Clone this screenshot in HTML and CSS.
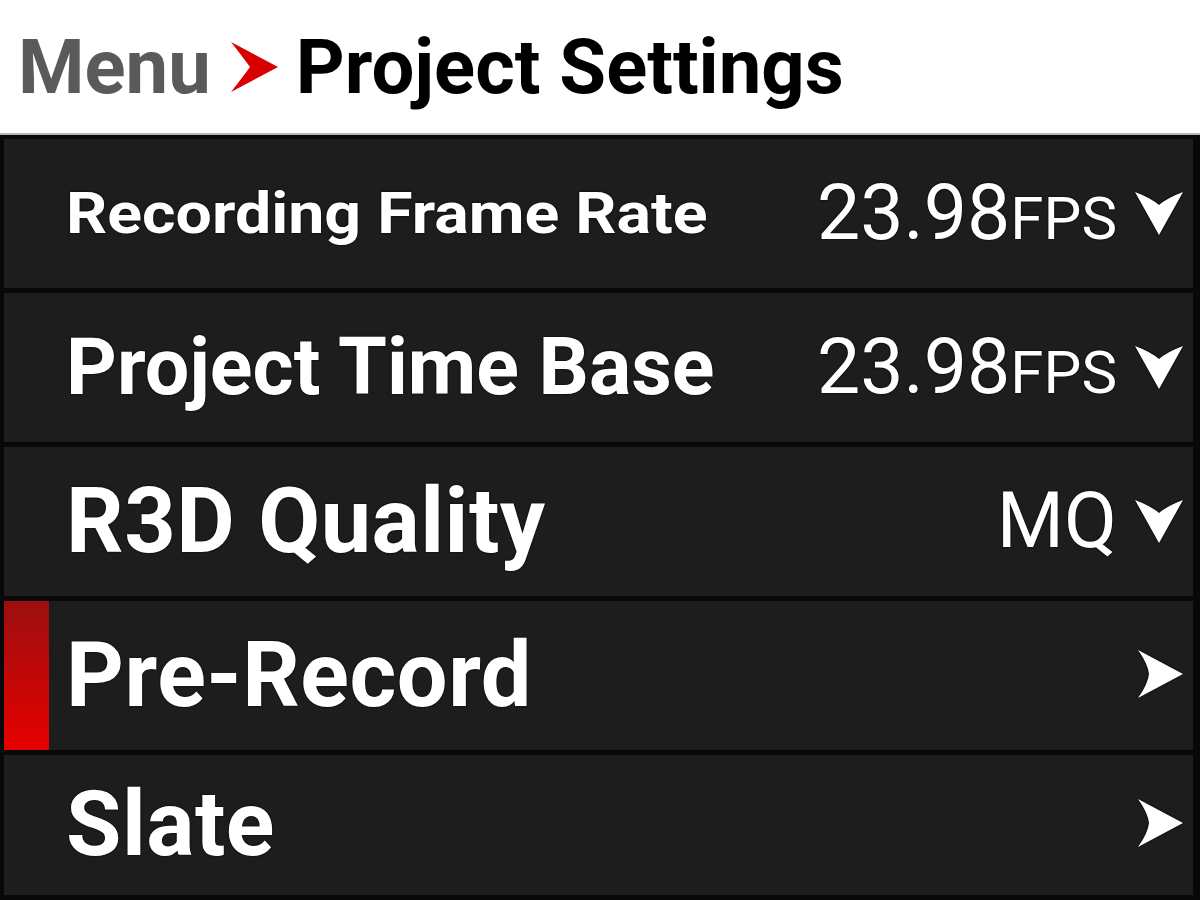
FILE: index.html
```html
<!DOCTYPE html>
<html lang="en">
<head>
<meta charset="utf-8">
<title>Project Settings</title>
<link rel="stylesheet" href="styles.css">
</head>
<body>
<header class="crumbs">
  <span class="crumb-parent">Menu</span>
  <svg class="crumb-sep" viewBox="0 0 47 50" width="47" height="50" aria-hidden="true"><path d="M0 0 L47 25 L0 50 Q14 32 19 25 Q14 18 0 0 Z" fill="#d80000"/></svg>
  <span class="crumb-current">Project Settings</span>
</header>
<main class="list">
  <div class="row">
    <span class="label"><span class="label-s">Recording Frame Rate</span></span>
    <span class="value">23.98<span class="unit">FPS</span></span>
    <svg class="icon-down" viewBox="0 0 48 43" width="48" height="43" aria-hidden="true"><path d="M0 0 Q16 6 24 13 Q32 6 48 0 L24 43 Z" fill="#fff"/></svg>
  </div>
  <div class="row">
    <span class="label label-m">Project Time Base</span>
    <span class="value">23.98<span class="unit">FPS</span></span>
    <svg class="icon-down" viewBox="0 0 48 43" width="48" height="43" aria-hidden="true"><path d="M0 0 Q16 6 24 13 Q32 6 48 0 L24 43 Z" fill="#fff"/></svg>
  </div>
  <div class="row">
    <span class="label label-l">R3D Quality</span>
    <span class="value">MQ</span>
    <svg class="icon-down" viewBox="0 0 48 43" width="48" height="43" aria-hidden="true"><path d="M0 0 Q16 6 24 13 Q32 6 48 0 L24 43 Z" fill="#fff"/></svg>
  </div>
  <div class="row row-selected">
    <span class="label label-l">Pre-Record</span>
    <svg class="icon-right" viewBox="0 0 45 48" width="45" height="48" aria-hidden="true"><path d="M0 0 L45 24 L0 48 Q10 34 11 24 Q10 14 0 0 Z" fill="#fff"/></svg>
  </div>
  <div class="row row-last">
    <span class="label label-l">Slate</span>
    <svg class="icon-right" viewBox="0 0 45 48" width="45" height="48" aria-hidden="true"><path d="M0 0 L45 24 L0 48 Q10 34 11 24 Q10 14 0 0 Z" fill="#fff"/></svg>
  </div>
</main>
</body>
</html>
```

FILE: styles.css
```css
html, body {
  margin: 0;
  padding: 0;
  height: 100%;
  background: #ffffff;
  font-family: Roboto, "Liberation Sans", sans-serif;
  overflow: hidden;
}

body {
  display: flex;
  flex-direction: column;
  width: 1200px;
  height: 900px;
}

.crumbs {
  height: 133px;
  flex: none;
  display: flex;
  align-items: center;
  padding-left: 18px;
  border-bottom: 2px solid #b4b4b4;
  font-size: 76px;
  font-weight: 700;
  line-height: 1;
}

.crumb-parent {
  color: #5a5a5a;
}

.crumb-sep {
  margin: 0 18px 0 20px;
  flex: none;
}

.crumb-current {
  color: #000;
}

.list {
  flex: 1;
  display: flex;
  flex-direction: column;
  gap: 5px;
  padding: 4px 7px 5px 4px;
  background: #080808;
  min-height: 0;
}

.row {
  position: relative;
  height: 149px;
  flex: none;
  display: flex;
  align-items: center;
  background: #1d1d1d;
  color: #fff;
  padding: 0 10px 0 62px;
  text-shadow: 0 0 2px #000, 0 0 1px #000;
}

.row-last {
  flex: 1;
  height: auto;
}

.row-selected::before {
  content: "";
  position: absolute;
  left: 0;
  top: 0;
  bottom: 0;
  width: 45px;
  background: linear-gradient(to bottom, #9c0f0f, #e60000);
}

.label {
  font-weight: 700;
  line-height: 1;
  flex: 1;
  white-space: nowrap;
}

.label-s {
  display: inline-block;
  font-size: 57px;
  transform: scaleX(1.13);
  transform-origin: left center;
}

.label-m {
  font-size: 79px;
}

.label-l {
  font-size: 90px;
  letter-spacing: 0.5px;
}

.value {
  font-size: 77px;
  font-weight: 400;
  line-height: 1;
  margin-right: 18px;
}

.unit {
  font-size: 60px;
}

.icon-down,
.icon-right {
  flex: none;
  filter: drop-shadow(0 0 1px #000);
}

.icon-right {
  margin-top: -4px;
}
```
